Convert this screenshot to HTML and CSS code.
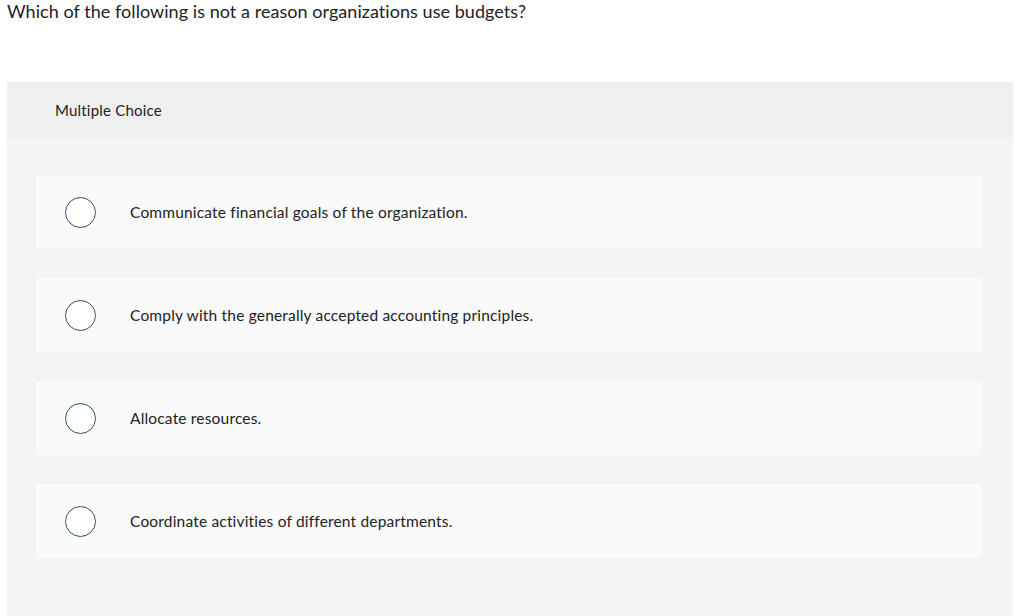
FILE: index.html
```html
<!DOCTYPE html>
<html>
<head>
<meta charset="utf-8">
<link rel="stylesheet" href="styles.css">
</head>
<body>
<div class="question">Which of the following is not a reason organizations use budgets?</div>
<div class="panel">
  <div class="panel-header">Multiple Choice</div>
  <div class="options">
    <div class="option"><span class="radio"></span><span class="label">Communicate financial goals of the organization.</span></div>
    <div class="option"><span class="radio"></span><span class="label">Comply with the generally accepted accounting principles.</span></div>
    <div class="option"><span class="radio"></span><span class="label">Allocate resources.</span></div>
    <div class="option"><span class="radio"></span><span class="label">Coordinate activities of different departments.</span></div>
  </div>
</div>
</body>
</html>
```
FILE: styles.css
```css
html, body {
  margin: 0;
  padding: 0;
  background: #ffffff;
  font-family: Lato, "Open Sans", "Liberation Sans", sans-serif;
  color: #222222;
  overflow: hidden;
}
.question {
  padding-left: 7px;
  font-size: 18px;
  letter-spacing: 0.05px;
  line-height: 23px;
  height: 24px;
}
.panel {
  margin: 58px 11px 0 7px;
  background: #f4f4f4;
  height: calc(100vh - 82px);
}
.panel-header {
  height: 56px;
  display: flex;
  align-items: center;
  padding-left: 48px;
  background: #efefef;
  font-size: 15px;
  letter-spacing: 0.2px;
}
.options {
  display: flex;
  flex-direction: column;
  gap: 29px;
  padding: 37px 32px 0 29px;
}
.option {
  height: 74px;
  display: flex;
  align-items: center;
  background: #fafafa;
  padding-left: 29px;
}
.radio {
  width: 29px;
  height: 29px;
  border: 1.5px solid #2f5273;
  border-radius: 50%;
  background: #ffffff;
  flex: none;
}
.label {
  margin-left: 34px;
  font-size: 15.5px;
  letter-spacing: 0.18px;
}
```
